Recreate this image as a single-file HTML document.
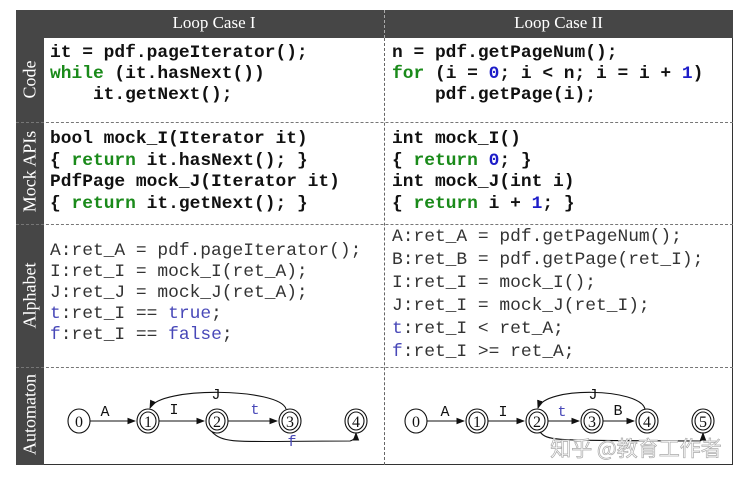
<!DOCTYPE html>
<html><head><meta charset="utf-8"><style>
body{margin:0;width:747px;height:478px;background:#fff;position:relative;overflow:hidden}
.a{position:absolute}
.m{font-family:"Liberation Mono",monospace;font-size:17.9px;white-space:pre;line-height:21px;color:#111}
.b{font-weight:bold}
.g{color:#1a8a1a}.n{color:#1c1cc8}.p{color:#4848b8}
.m:not(.b){color:#333}
.hd{font-family:"Liberation Serif",serif;color:#fff;font-size:17px}
.vl{font-family:"Liberation Serif",serif;color:#fff;font-size:18px;transform:rotate(-90deg);transform-origin:center;white-space:nowrap;text-align:center;width:120px}
.hr{position:absolute;left:16px;width:717px;border-top:1px dashed #777}
</style></head><body>
<div class="a" style="left:16px;top:10px;width:717px;height:28px;background:#464646"></div>
<div class="a" style="left:16px;top:10px;width:28px;height:455px;background:#464646"></div>
<div class="a" style="left:44px;top:38px;width:688px;height:426px;border-right:1px solid #333;border-bottom:1px solid #333"></div>
<div class="a" style="left:384px;top:10px;height:28px;border-left:1px dashed #aaa"></div>
<div class="a" style="left:384px;top:38px;height:427px;border-left:1px dashed #666"></div>
<div class="hr" style="top:122px"></div>
<div class="hr" style="top:224px"></div>
<div class="hr" style="top:367px"></div>
<div class="a hd" style="left:44px;top:13px;width:340px;text-align:center">Loop Case I</div>
<div class="a hd" style="left:385px;top:13px;width:347px;text-align:center">Loop Case II</div>
<div class="a vl" style="left:-30px;top:69px">Code</div>
<div class="a vl" style="left:-30px;top:161px">Mock APIs</div>
<div class="a vl" style="left:-30px;top:285px">Alphabet</div>
<div class="a vl" style="left:-30px;top:404px">Automaton</div>

<div class="a m b" style="left:50px;top:43px">it = pdf.pageIterator();
<span class="g">while</span> (it.hasNext())
    it.getNext();</div>
<div class="a m b" style="left:392px;top:43px">n = pdf.getPageNum();
<span class="g">for</span> (i = <span class="n">0</span>; i &lt; n; i = i + <span class="n">1</span>)
    pdf.getPage(i);</div>
<div class="a m b" style="left:50px;top:129px;line-height:21.5px">bool mock_I(Iterator it)
{ <span class="g">return</span> it.hasNext(); }
PdfPage mock_J(Iterator it)
{ <span class="g">return</span> it.getNext(); }</div>
<div class="a m b" style="left:392px;top:129px;line-height:21.5px">int mock_I()
{ <span class="g">return</span> <span class="n">0</span>; }
int mock_J(int i)
{ <span class="g">return</span> i + <span class="n">1</span>; }</div>
<div class="a m" style="left:50px;top:241px">A:ret_A = pdf.pageIterator();
I:ret_I = mock_I(ret_A);
J:ret_J = mock_J(ret_A);
<span class="p">t</span>:ret_I == <span class="p">true</span>;
<span class="p">f</span>:ret_I == <span class="p">false</span>;</div>
<div class="a m" style="left:392px;top:226px;line-height:23px">A:ret_A = pdf.getPageNum();
B:ret_B = pdf.getPage(ret_I);
I:ret_I = mock_I();
J:ret_I = mock_J(ret_I);
<span class="p">t</span>:ret_I &lt; ret_A;
<span class="p">f</span>:ret_I &gt;= ret_A;</div>

<svg class="a" style="left:0;top:0" width="747" height="478">
<defs><marker id="ar" markerWidth="8" markerHeight="6" refX="7" refY="3" orient="auto"><path d="M0,0L8,3L0,6z" fill="#111"/></marker></defs>
<g stroke="#111" fill="none" stroke-width="1.1">
<ellipse cx="79" cy="421" rx="11" ry="12"/>
<ellipse cx="148" cy="421" rx="11" ry="12"/><ellipse cx="148" cy="421" rx="8" ry="9"/>
<ellipse cx="217" cy="421" rx="11" ry="12"/><ellipse cx="217" cy="421" rx="8" ry="9"/>
<ellipse cx="290" cy="421" rx="11" ry="12"/><ellipse cx="290" cy="421" rx="8" ry="9"/>
<ellipse cx="356" cy="421" rx="11" ry="12"/><ellipse cx="356" cy="421" rx="8" ry="9"/>
<path d="M90,421H135" marker-end="url(#ar)"/>
<path d="M159,421H204" marker-end="url(#ar)"/>
<path d="M228,421H277" marker-end="url(#ar)"/>
<path d="M286,409C280,388 160,386 150,408" marker-end="url(#ar)"/>
<path d="M212,432C225,445 240,441 350,441C354,440 356,437 356,433" marker-end="url(#ar)"/>
<ellipse cx="416" cy="421" rx="11" ry="12"/>
<ellipse cx="477" cy="421" rx="11" ry="12"/><ellipse cx="477" cy="421" rx="8" ry="9"/>
<ellipse cx="537" cy="421" rx="11" ry="12"/><ellipse cx="537" cy="421" rx="8" ry="9"/>
<ellipse cx="592" cy="421" rx="11" ry="12"/><ellipse cx="592" cy="421" rx="8" ry="9"/>
<ellipse cx="647" cy="421" rx="11" ry="12"/><ellipse cx="647" cy="421" rx="8" ry="9"/>
<ellipse cx="703" cy="421" rx="11" ry="12"/><ellipse cx="703" cy="421" rx="8" ry="9"/>
<path d="M427,421H464" marker-end="url(#ar)"/>
<path d="M488,421H524" marker-end="url(#ar)"/>
<path d="M548,421H579" marker-end="url(#ar)"/>
<path d="M603,421H634" marker-end="url(#ar)"/>
<path d="M645,409C640,388 545,386 538,408" marker-end="url(#ar)"/>
<path d="M540,432C548,442 560,440 700,441C703,440 703,437 703,433" marker-end="url(#ar)"/>
</g>
<g font-family="Liberation Serif,serif" font-size="16" text-anchor="middle" fill="#111">
<text x="79" y="427">0</text><text x="148" y="427">1</text><text x="217" y="427">2</text><text x="290" y="427">3</text><text x="356" y="427">4</text>
<text x="416" y="427">0</text><text x="477" y="427">1</text><text x="537" y="427">2</text><text x="592" y="427">3</text><text x="647" y="427">4</text><text x="703" y="427">5</text>
</g>
<g font-family="Liberation Mono,monospace" font-size="15" text-anchor="middle" fill="#111">
<text x="105" y="416">A</text><text x="174" y="414">I</text><text x="255" y="414" fill="#4848b8">t</text>
<text x="216" y="399">J</text><text x="292" y="446" fill="#4848b8">f</text>
<text x="445" y="416">A</text><text x="503" y="416">I</text><text x="562" y="416" fill="#4848b8">t</text><text x="618" y="415">B</text>
<text x="593" y="399">J</text>
</g>
<text x="636" y="456" font-family="Noto Sans CJK SC,sans-serif" font-size="21" fill="#fff" stroke="#aaa" stroke-width="0.7" text-anchor="middle">知乎 @教育工作者</text>
</svg>
</body></html>
